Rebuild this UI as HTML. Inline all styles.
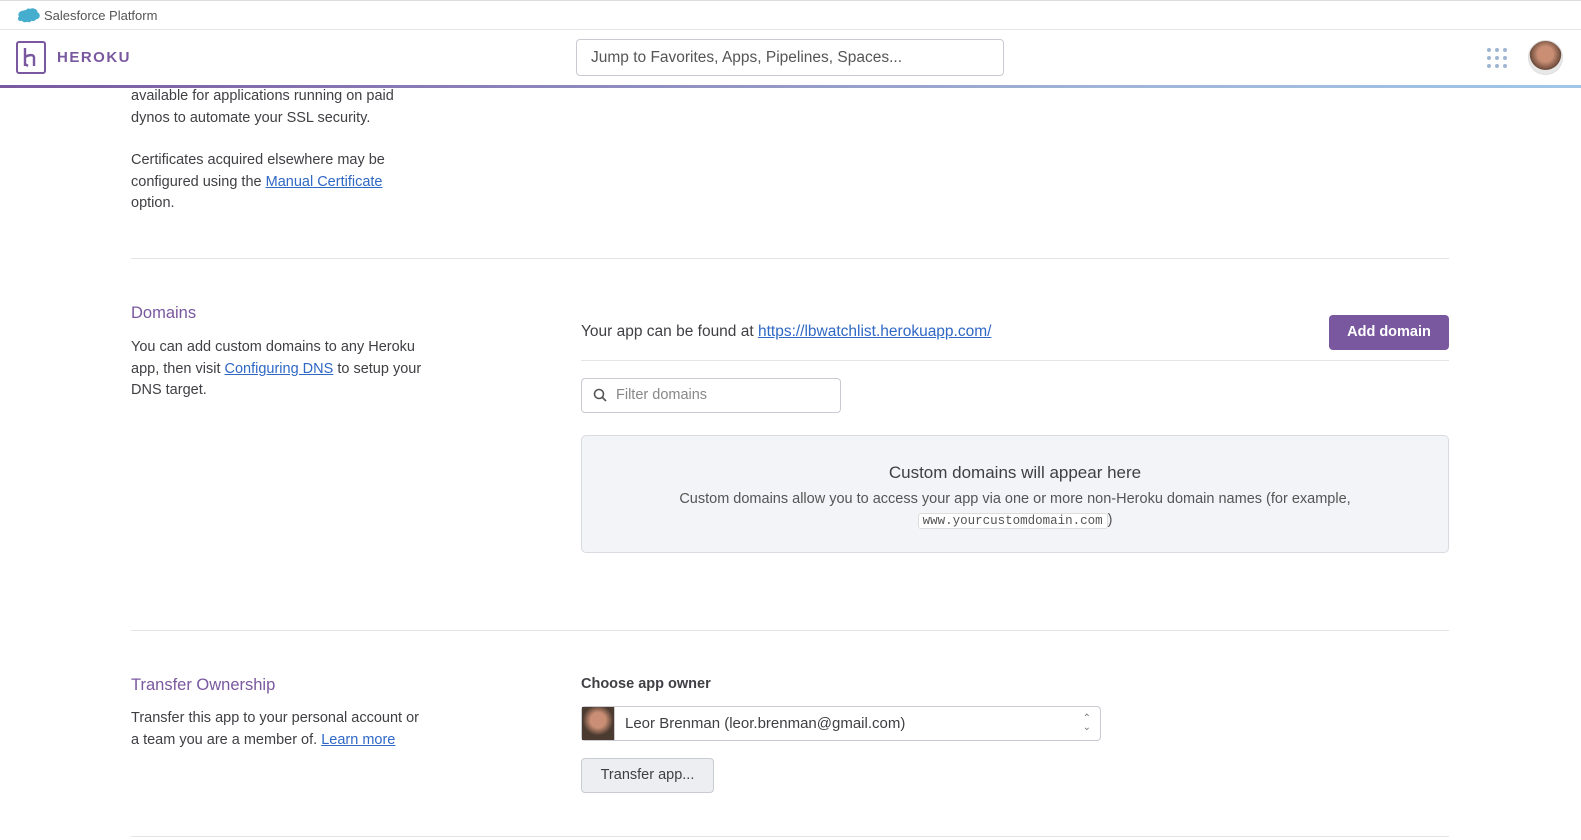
<!DOCTYPE html>
<html><head><style>
*{box-sizing:border-box}
body{margin:0;width:1581px;height:840px;overflow:hidden;background:#fff;font-family:"Liberation Sans",sans-serif;color:#3f3f44;position:relative}
.abs{position:absolute}
.top{left:0;top:0;width:1581px;height:30px;background:#fff;border-bottom:1px solid #e5e5ea;border-top:1px solid #ddd}
.nav{left:0;top:30px;width:1581px;height:56px;background:#fff}
.grad{left:0;top:85px;width:1581px;height:3px;background:linear-gradient(90deg,#79589f,#a0b4d8 70%,#9fc6e8)}
p,.t{margin:0;font-size:14.5px;line-height:21.5px;color:#3f3f44}
a{color:#2f68c5;text-decoration:underline}
.h{font-size:16.5px;color:#79589f}
.hr{left:131px;width:1318px;height:1px;background:#e3e4e8}
</style></head><body>
<div class="abs top">
 <svg class="abs" style="left:16px;top:7px" width="24" height="17" viewBox="0 0 24 17"><path d="M10 2c1-1.5 3-2 4.5-1 1-.8 2.5-1 3.8-.2 1.8.2 3.2 1.8 3.2 3.6 1.6.6 2.5 2.2 2.2 3.9-.3 1.7-1.8 3-3.6 3-.9 1.700-2.9 2.3-4.6 1.5-1 1.5-3.1 1.9-4.6.9-1.7 1.1-4 .6-5-1.1C3.5 13.6 2 12.4 2 10.7c0-.9.4-1.700 1-2.3C1.9 7 2.4 4.6 4.2 3.600 5.6 2.6 8.2 2.4 10 2z" fill="#1798c1" opacity=".8"/></svg>
 <span class="abs" style="left:44px;top:7px;font-size:13px;color:#555">Salesforce Platform</span>
</div>
<div class="abs nav">
 <div class="abs" style="left:16px;top:11px;width:30px;height:33px;border:2px solid #79589f;border-radius:3px"></div>
 <svg class="abs" style="left:16px;top:11px" width="30" height="33" viewBox="0 0 30 33"><path d="M9 7v18M9 16c3-2 8-3 9 0v9M9 23l3 2" stroke="#79589f" stroke-width="2.4" fill="none"/></svg>
 <span class="abs" style="left:57px;top:19px;font-size:15px;font-weight:bold;letter-spacing:1.5px;color:#79589f">HEROKU</span>
 <div class="abs" style="left:576px;top:9px;width:428px;height:37px;border:1px solid #c9cbd2;border-radius:4px;background:#fff;padding:9px 14px;font-size:15.5px;color:#555">Jump to Favorites, Apps, Pipelines, Spaces...</div>
 <svg class="abs" style="left:1486px;top:17px" width="22" height="22"><g fill="#9fb5d3"><circle cx="3" cy="3" r="2"/><circle cx="11" cy="3" r="2"/><circle cx="19" cy="3" r="2"/><circle cx="3" cy="11" r="2"/><circle cx="11" cy="11" r="2"/><circle cx="19" cy="11" r="2"/><circle cx="3" cy="19" r="2"/><circle cx="11" cy="19" r="2"/><circle cx="19" cy="19" r="2"/></g></svg>
 <div class="abs" style="left:1528px;top:10px;width:35px;height:35px;border-radius:50%;background:radial-gradient(circle at 50% 40%,#c98e74 30%,#6b4a3a 60%,#e8e8e8 62%);border:1px solid #ddd"></div>
</div>
<div class="abs grad"></div>

<div class="abs" style="left:131px;top:86px;width:275px"><p>available for applications running on paid dynos to automate your SSL security.</p><p style="margin-top:21px">Certificates acquired elsewhere may be configured using the <a>Manual Certificate</a> option.</p></div>
<div class="abs hr" style="top:258px"></div>

<div class="abs h" style="left:131px;top:304px">Domains</div>
<div class="abs" style="left:131px;top:337px;width:305px"><p>You can add custom domains to any Heroku app, then visit <a>Configuring DNS</a> to setup your DNS target.</p></div>
<div class="abs t" style="left:581px;top:321px;font-size:15.5px">Your app can be found at <a>https://lbwatchlist.herokuapp.com/</a></div>
<div class="abs" style="left:1329px;top:315px;width:120px;height:35px;background:#79589f;border-radius:4px;color:#fff;font-weight:bold;font-size:14.5px;text-align:center;line-height:35px">Add domain</div>
<div class="abs" style="left:581px;top:360px;width:868px;height:1px;background:#e3e4e8"></div>
<div class="abs" style="left:581px;top:378px;width:260px;height:35px;border:1px solid #c9cbd2;border-radius:4px;background:#fff;padding:8px 0 0 34px;font-size:14.5px;color:#888">Filter domains</div>
<svg class="abs" style="left:593px;top:388px" width="14" height="14"><circle cx="6" cy="6" r="4.5" stroke="#555" stroke-width="1.6" fill="none"/><path d="M9.5 9.5L13 13" stroke="#555" stroke-width="1.6"/></svg>
<div class="abs" style="left:581px;top:435px;width:868px;height:118px;border:1px solid #d9dbe0;border-radius:5px;background:#f3f4f7;text-align:center">
 <div style="margin-top:27px;font-size:17px;color:#3f3f44">Custom domains will appear here</div>
 <div style="margin-top:6px;font-size:14.5px;line-height:21px;color:#555">Custom domains allow you to access your app via one or more non-Heroku domain names (for example,<br><code style="font-family:'Liberation Mono',monospace;font-size:12.5px;background:#fff;border:1px solid #ddd;border-radius:3px;padding:0 4px">www.yourcustomdomain.com</code>)</div>
</div>
<div class="abs hr" style="top:630px"></div>

<div class="abs h" style="left:131px;top:676px">Transfer Ownership</div>
<div class="abs" style="left:131px;top:708px;width:298px"><p>Transfer this app to your personal account or a team you are a member of. <a>Learn more</a></p></div>
<div class="abs" style="left:581px;top:676px;font-weight:bold;font-size:14.5px">Choose app owner</div>
<div class="abs" style="left:581px;top:706px;width:520px;height:35px;border:1px solid #c9cbd2;border-radius:4px;background:#fff">
 <div class="abs" style="left:0;top:0;width:33px;height:33px;background:radial-gradient(circle at 50% 40%,#c98e74 30%,#4b3a30 60%);border-right:1px solid #ccc"></div>
 <span class="abs" style="left:43px;top:8px;font-size:15px">Leor Brenman (leor.brenman@gmail.com)</span>
 <span class="abs" style="right:9px;top:7px;font-size:10px;color:#777;line-height:9px">⌃<br>⌄</span>
</div>
<div class="abs" style="left:581px;top:758px;width:133px;height:35px;border:1px solid #c9cbd2;border-radius:4px;background:#eceef2;text-align:center;line-height:33px;font-size:14.5px">Transfer app...</div>
<div class="abs hr" style="top:836px"></div>
</body></html>
